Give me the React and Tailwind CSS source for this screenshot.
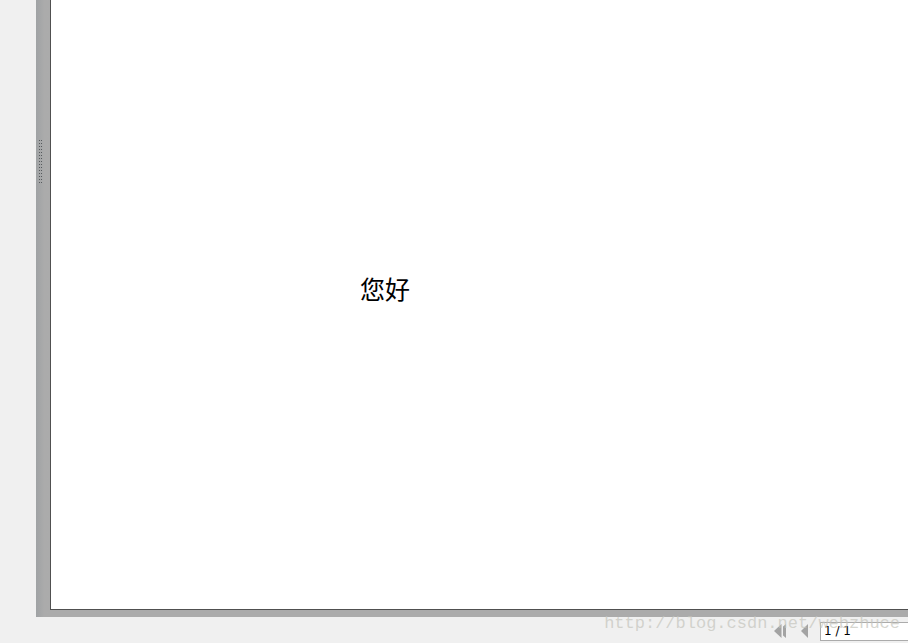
const GRIP_ROWS = Array.from({ length: 15 }, (_, i) => i);

function SplitterGrip() {
  return (
    <svg className="ml-[3px] mt-[140px]" width="3" height="43" shapeRendering="crispEdges" aria-hidden="true">
      {GRIP_ROWS.map((row) => (
        <g key={row} fill="#55595c">
          <rect x="0" y={row * 3} width="1" height="1" />
          <rect x="2" y={row * 3} width="1" height="1" />
        </g>
      ))}
    </svg>
  );
}

function PageNav() {
  return (
    <footer className="relative flex h-[26px] shrink-0 items-center justify-end bg-[#f0f0f0] pt-1 pb-[2px]">
      <button type="button" aria-label="First page" className="mr-[14px]">
        <svg className="block" width="13" height="14" fill="#a3a3a3" aria-hidden="true">
          <path d="M7.500 0v14L0 7z" />
          <path d="M9 2.500L12 0v14l-3-2.500z" />
        </svg>
      </button>
      <button type="button" aria-label="Previous page" className="mr-3">
        <svg className="block" width="7" height="14" fill="#a3a3a3" aria-hidden="true">
          <path d="M7 0v14L0 7z" />
        </svg>
      </button>
      <input
        type="text"
        aria-label="Page number"
        defaultValue="1 / 1"
        className="h-[19px] w-[88px] border border-r-0 border-[#ababab] bg-white px-[3px] font-['DejaVu_Sans',sans-serif] text-[12px] text-black outline-none"
      />
      {/* watermark runs over the scroll area edge and the nav bar */}
      <span className="pointer-events-none absolute -top-[3px] right-2 whitespace-nowrap font-['Liberation_Mono',monospace] text-[17px] leading-5 text-[#c4c4bc]/70">
        http://blog.csdn.net/webzhuce
      </span>
    </footer>
  );
}

export default function App() {
  return (
    <div className="flex h-screen flex-col overflow-hidden bg-[#f0f0f0]">
      <main className="flex min-h-0 flex-1 pl-9">
        <div className="w-[14px] shrink-0 bg-linear-to-r from-[#9fa2a4] to-[#ababab] to-60%">
          <SplitterGrip />
        </div>
        <div className="flex min-w-0 flex-1 flex-col bg-[#ababab] pb-[7px]">
          <article className="flex-1 border-b border-l border-[#505050] bg-white pl-[309px] pt-[270px]">
            <p className="font-['Noto_Sans_CJK_SC',sans-serif] text-[25px] leading-9 text-black">您好</p>
          </article>
        </div>
      </main>
      <PageNav />
    </div>
  );
}
